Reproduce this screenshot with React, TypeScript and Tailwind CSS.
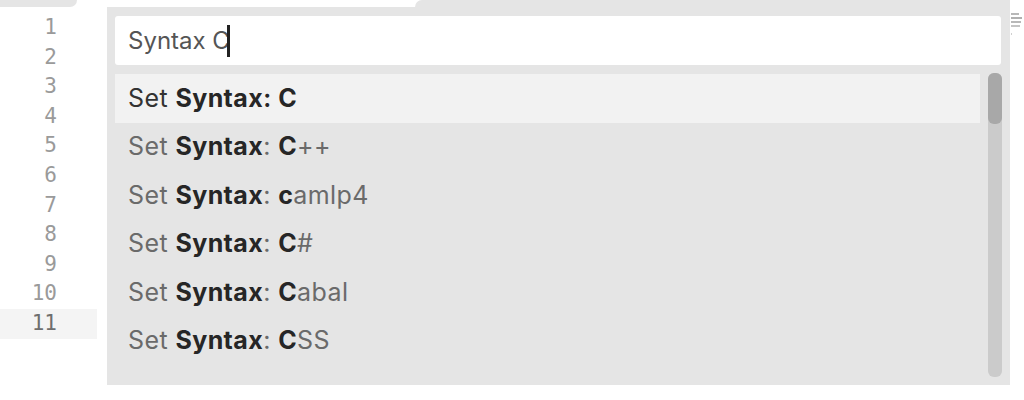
const rows = [
  { match: "C", rest: "" },
  { match: "C", rest: "++" },
  { match: "c", rest: "amlp4" },
  { match: "C", rest: "#" },
  { match: "C", rest: "abal" },
  { match: "C", rest: "SS" },
]

const lines = Array.from({ length: 11 }, (_, i) => i + 1)

export default function App() {
  return (
    <div className="w-[1024px] h-[400px] bg-white flex overflow-hidden">
      {/* gutter */}
      <div className="w-[107px] shrink-0 flex flex-col">
        <div className="w-[77px] h-[7px] bg-[#e5e5e5] rounded-br-[8px]" />
        <div className="pt-[6px] font-['DejaVu_Sans_Mono',monospace] text-[21px]">
          {lines.map((n) => (
            <div
              key={n}
              className={`w-[97px] h-[29.6px] leading-[29.6px] ${n === 11 ? "bg-[#f4f4f4] text-[#6e6e6e]" : "text-[#9a9a9a]"}`}
            >
              <div className="w-[57px] text-right">{n}</div>
            </div>
          ))}
        </div>
      </div>

      {/* command palette */}
      <div className="w-[903px] h-[385px] shrink-0 flex flex-col font-['Inter',sans-serif]">
        <div className="h-[7px] flex">
          <div className="w-[308px] bg-white" />
          <div className="flex-1 bg-[#e5e5e5] rounded-tl-[8px]" />
        </div>
        <div className="flex-1 bg-[#e5e5e5] flex flex-col pt-[9px] pb-[8px]">
          <div className="ml-[8px] mr-[9px] h-[49px] bg-white rounded-[3px] flex items-center pl-[13px] text-[24px] text-[#555]">
            <span>Syntax C</span>
            <span className="w-[3px] h-[32px] bg-[#222] -ml-[3px]" />
          </div>
          <div className="flex-1 flex pt-[8px] pl-[8px] pr-[8px] gap-[8px]">
            <div className="flex-1 pt-[1px]">
              {rows.map((r, i) => (
                <div
                  key={i}
                  className={`h-[48.5px] flex items-center pl-[13px] text-[25px] tracking-[0.4px] ${i === 0 ? "bg-[#f2f2f2] text-[#333]" : "text-[#6a6a6a]"}`}
                >
                  <span>Set&nbsp;</span>
                  <span className="font-bold text-[#262626]">Syntax</span>
                  <span className={i === 0 ? "text-[#262626] font-semibold" : ""}>:&nbsp;</span>
                  <span className="font-bold text-[#262626]">{r.match}</span>
                  <span>{r.rest}</span>
                </div>
              ))}
            </div>
            <div className="w-[14px] bg-[#cbcbcb] rounded-[6px] flex flex-col">
              <div className="h-[51px] bg-[#a8a8a8] rounded-[6px]" />
            </div>
          </div>
        </div>
      </div>

      {/* minimap */}
      <div className="flex-1 pt-[13px] pl-[1px] flex flex-col gap-[2px]">
        <div className="w-[8px] h-[2px] bg-[#b8b8b8]" />
        <div className="w-[11px] h-[2px] bg-[#b0b0b0]" />
        <div className="w-[10px] h-[2px] bg-[#b8b8b8]" />
        <div className="w-[9px] h-[2px] bg-[#c4c4c4]" />
        <div className="w-[1px] h-[2px] bg-[#d0d0d0] mt-[4px]" />
      </div>
    </div>
  )
}
